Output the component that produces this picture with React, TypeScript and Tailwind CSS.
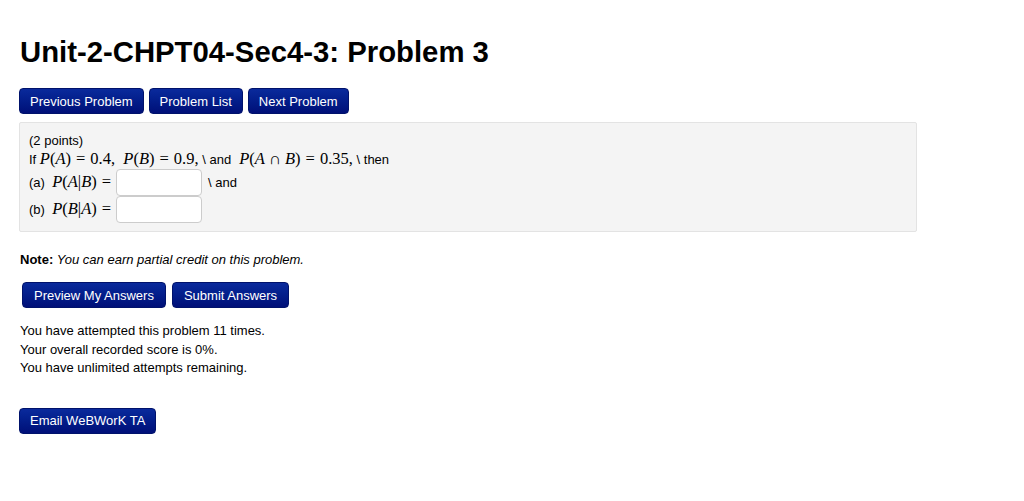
import React from 'react'

const btn =
  'h-[26px] px-[10px] rounded-[4px] border border-[#00126b] bg-gradient-to-b from-[#0a2a9c] to-[#000f78] text-white text-[13px] leading-none font-["Liberation_Sans",Arial,sans-serif]'

function V({ children }: { children: React.ReactNode }) {
  return <i className="font-['Liberation_Serif',serif]">{children}</i>
}

function Eq() {
  return <span className="mx-[5px]">=</span>
}

function M({ children, className = '' }: { children: React.ReactNode; className?: string }) {
  return (
    <span className={'font-[\'Liberation_Serif\',serif] text-[16.5px] whitespace-pre ' + className}>
      {children}
    </span>
  )
}

export default function App() {
  return (
    <div className="min-h-screen bg-white pl-[20px] text-black font-['Liberation_Sans',Arial,sans-serif] text-[13px]">
      <h1 className="pt-[36px] text-[29.3px] font-bold leading-[32px]">
        Unit-2-CHPT04-Sec4-3: Problem 3
      </h1>

      {/* Nav buttons */}
      <div className="flex gap-[5px] mt-[20px] -ml-px">
        <button className={btn}>Previous Problem</button>
        <button className={btn}>Problem List</button>
        <button className={btn}>Next Problem</button>
      </div>

      {/* Problem box */}
      <div className="mt-[8px] -ml-px w-[898px] border border-[#e3e3e3] bg-[#f4f4f4] rounded-[2px] px-[9px] pt-[9px] pb-[8px]">
        <div className="leading-[18px]">(2 points)</div>
        <div className="leading-[18px]">
          If{' '}
          <M>
            <V>P</V>(<V>A</V>)<Eq />0.4,{'  '}<V>P</V>(<V>B</V>)<Eq />0.9,
          </M>
          {' '}\ and
          <M className="ml-[8px]">
            <V>P</V>(<V>A</V> ∩ <V>B</V>)<Eq />0.35,
          </M>
          {' '}\ then
        </div>
        <div className="flex items-center h-[27px]">
          <span>(a)&nbsp;&nbsp;</span>
          <M>
            <V>P</V>(<V>A</V>|<V>B</V>)<Eq />
          </M>
          <div className="w-[86px] h-[27px] bg-white border border-[#cccccc] rounded-[4px]" />
          <span className="ml-[6px]">\ and</span>
        </div>
        <div className="flex items-center h-[27px]">
          <span>(b)&nbsp;&nbsp;</span>
          <M>
            <V>P</V>(<V>B</V>|<V>A</V>)<Eq />
          </M>
          <div className="w-[86px] h-[27px] bg-white border border-[#cccccc] rounded-[4px]" />
        </div>
      </div>

      <div className="mt-[19px] leading-[18px]">
        <b>Note:</b> <i>You can earn partial credit on this problem.</i>
      </div>

      <div className="flex gap-[6px] mt-[13px] ml-[2px]">
        <button className={btn + ' !px-[11px]'}>Preview My Answers</button>
        <button className={btn + ' !px-[11px]'}>Submit Answers</button>
      </div>

      <div className="mt-[14px] leading-[18.5px]">
        <div>You have attempted this problem 11 times.</div>
        <div>Your overall recorded score is 0%.</div>
        <div>You have unlimited attempts remaining.</div>
      </div>

      <div className="mt-[30px] -ml-px">
        <button className={btn}>Email WeBWorK TA</button>
      </div>
    </div>
  )
}
